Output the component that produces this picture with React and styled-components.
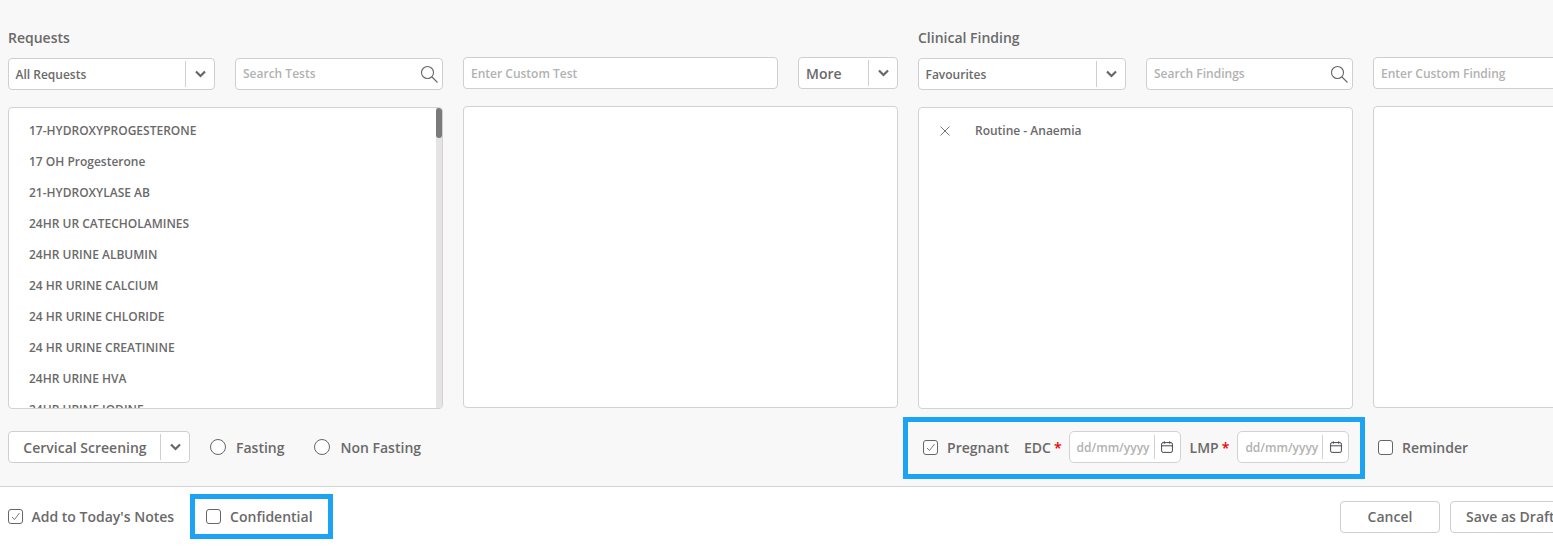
import React from "react";
import styled, { createGlobalStyle } from "styled-components";

const Global = createGlobalStyle`
  html, body { margin: 0; padding: 0; background: #fff; overflow: hidden; }
  body { font-family: "Open Sans", "Liberation Sans", sans-serif; color: #5f5f5f; }
  * { box-sizing: border-box; }
`;
const Page = styled.div`width:1553px;height:546px;overflow:hidden;display:flex;flex-direction:column;`;
const Main = styled.main`height:487px;flex:none;background:#f8f8f8;border-bottom:1px solid #d4d4d4;padding:28px 0 0 8px;`;
const Columns = styled.div`display:grid;grid-template-columns:repeat(4,435px);column-gap:20px;width:1800px;`;
const Column = styled.section`margin-top:${p=>p.$raised?-1:0}px;`;
const Heading = styled.h2`margin:0;height:20px;font-size:14px;line-height:19px;font-weight:600;color:#6a6a6a;`;
const Controls = styled.div`margin-top:10px;height:49px;display:flex;gap:20px;`;
const Field = styled.div`
  width:${p=>p.$w}px;height:32px;background:#fff;border:1px solid #cfcfcf;border-radius:4px;
  display:flex;align-items:center;flex:none;
`;
const SelectText = styled.span`flex:1;padding:1px 0 0 6.5px;font-size:12px;font-weight:600;color:#6a6a6a;`;
const Divider = styled.span`width:1px;height:26px;background:#cfcfcf;flex:none;`;
const Arrow = styled.span`width:28px;display:flex;justify-content:center;flex:none;`;
const Ph = styled.span`flex:1;padding:0 0 ${p=>p.$raised?0:2}px 7px;font-size:12px;font-weight:600;color:#b2b2b2;white-space:nowrap;`;
const Icon = styled.span`display:flex;margin-right:3px;`;
const MoreText = styled.span`flex:1;padding:1px 0 0 7px;font-size:14px;font-weight:600;color:#6a6a6a;`;
const Panel = styled.div`
  height:302px;background:#fff;border:1px solid #d2d2d2;border-radius:4px;position:relative;overflow:hidden;
`;
const Items = styled.ul`list-style:none;margin:0;padding:7px 0 0 20px;`;
const Item = styled.li`height:31px;font-size:12px;line-height:31px;font-weight:600;color:#6a6a6a;white-space:nowrap;`;
const Track = styled.div`position:absolute;right:0;top:0;bottom:0;width:6px;background:#e5e3e3;`;
const Thumb = styled.div`height:30px;background:#7a7a7a;border-radius:3px;`;
const Chip = styled.div`display:flex;align-items:center;height:31px;margin-top:7px;padding-left:21px;font-size:12px;font-weight:600;color:#6a6a6a;gap:25px;`;
const Options = styled.div`height:60px;margin-top:8px;display:flex;align-items:center;`;
const Choice = styled.label`display:flex;align-items:center;gap:${p=>p.$gap||10}px;font-size:14px;font-weight:600;color:#6a6a6a;white-space:nowrap;margin-left:${p=>p.$ml||0}px;`;
const Radio = styled.span`width:16px;height:16px;border:1px solid #666;border-radius:50%;background:#fff;display:block;flex:none;`;
const Box = styled.span`width:15px;height:15px;border:1px solid #666;border-radius:3px;background:#fff;display:flex;align-items:center;justify-content:center;flex:none;`;
const CervicalText = styled.span`flex:1;text-align:center;padding-left:1px;font-size:14px;font-weight:600;color:#6a6a6a;`;
const WideHighlight = styled.div`
  border:5px solid #1ca3f4;display:flex;align-items:center;flex:none;
  height:62px;width:462px;margin:2px 0 0 482px;padding:0 0 2px 15px;
`;
const SmallHighlight = styled.div`
  border:5px solid #1ca3f4;display:flex;align-items:center;flex:none;
  height:45px;width:143px;margin-left:16px;padding-left:11px;
`;
const Req = styled.span`color:#e00;margin-left:3px;`;
const Lab = styled.span`font-size:14px;font-weight:600;color:#6a6a6a;margin-left:${p=>p.$ml||0}px;white-space:nowrap;`;
const DateBox = styled.div`
  width:112px;height:32px;background:#fff;border:1px solid #d2d2d2;border-radius:5px;display:flex;align-items:center;margin-left:${p=>p.$ml}px;flex:none;
`;
const DatePh = styled.span`font-size:12px;font-weight:600;color:#b2b2b2;padding-left:7px;width:84px;white-space:nowrap;overflow:hidden;flex:none;`;
const DateDiv = styled.span`width:1px;height:24px;background:#d2d2d2;flex:none;`;
const DateIcon = styled.span`flex:1;display:flex;justify-content:center;`;
const Footer = styled.footer`flex:1;background:#fff;display:flex;align-items:center;padding:0 0 0 8px;`;
const Actions = styled.div`margin-left:auto;display:flex;gap:10px;flex:none;width:213px;`;
const Btn = styled.button`
  height:32px;width:${p=>p.$w}px;flex:none;background:#fff;border:1px solid #cfcfcf;border-radius:4px;font-family:inherit;font-size:14px;font-weight:600;color:#6a6a6a;padding:0;white-space:nowrap;text-align:${p=>p.$left?"left":"center"};padding-left:${p=>p.$left?15:0}px;
`;

const Chevron = () => (
  <svg width="11" height="8" viewBox="0 0 11 8"><path d="M1 1.5l4.5 4.5L10 1.5" fill="none" stroke="#666" strokeWidth="2.2"/></svg>
);
const Search = () => (
  <svg width="20" height="20" viewBox="0 0 20 20"><circle cx="8.5" cy="8.5" r="6" fill="none" stroke="#666" strokeWidth="1.1"/><path d="M13 13l5.5 5.5" stroke="#666" strokeWidth="1.1"/></svg>
);
const Check = () => (
  <svg width="11" height="11" viewBox="0 0 11 11"><path d="M2 6l2.5 2.5L9.5 2" fill="none" stroke="#666" strokeWidth="0.9"/></svg>
);
const Close = () => (
  <svg width="10" height="10" viewBox="0 0 10 10" style={{flex:"none"}}><path d="M.5.5l9 9M9.5.5l-9 9" stroke="#666" strokeWidth="0.9"/></svg>
);
const Cal = () => (
  <svg width="12" height="12" viewBox="0 0 12 12"><rect x=".6" y="1.6" width="10.8" height="9.8" rx="1.5" fill="none" stroke="#4a4450" strokeWidth="1"/><path d="M.6 4.8h10.8M3.3.3v2.4M8.7.3v2.4" stroke="#4a4450" strokeWidth="1" fill="none"/></svg>
);

const tests = ["17-HYDROXYPROGESTERONE","17 OH Progesterone","21-HYDROXYLASE AB","24HR UR CATECHOLAMINES","24HR URINE ALBUMIN","24 HR URINE CALCIUM","24 HR URINE CHLORIDE","24 HR URINE CREATININE","24HR URINE HVA","24HR URINE IODINE"];

export default function App() {
  return (
    <Page>
      <Global />
      <Main>
        <Columns>
          <Column>
            <Heading>Requests</Heading>
            <Controls>
              <Field $w={207}>
                <SelectText>All Requests</SelectText><Divider /><Arrow><Chevron /></Arrow>
              </Field>
              <Field $w={208}><Ph>Search Tests</Ph><Icon><Search /></Icon></Field>
            </Controls>
            <Panel>
              <Items>{tests.map(t => <Item key={t}>{t}</Item>)}</Items>
              <Track><Thumb /></Track>
            </Panel>
          </Column>
          <Column $raised>
            <Heading />
            <Controls>
              <Field $w={315}><Ph $raised>Enter Custom Test</Ph></Field>
              <Field $w={100}><MoreText>More</MoreText><Divider /><Arrow><Chevron /></Arrow></Field>
            </Controls>
            <Panel />
          </Column>
          <Column>
            <Heading>Clinical Finding</Heading>
            <Controls>
              <Field $w={208}>
                <SelectText>Favourites</SelectText><Divider /><Arrow><Chevron /></Arrow>
              </Field>
              <Field $w={207}><Ph>Search Findings</Ph><Icon><Search /></Icon></Field>
            </Controls>
            <Panel><Chip><Close />Routine - Anaemia</Chip></Panel>
          </Column>
          <Column $raised>
            <Heading />
            <Controls>
              <Field $w={435}><Ph $raised>Enter Custom Finding</Ph></Field>
            </Controls>
            <Panel />
          </Column>
        </Columns>
        <Options>
          <Field $w={182}>
            <CervicalText>Cervical Screening</CervicalText><Divider /><Arrow><Chevron /></Arrow>
          </Field>
          <Choice $ml={20}><Radio />Fasting</Choice>
          <Choice $ml={29} $gap={11}><Radio />Non Fasting</Choice>
          <WideHighlight>
            <Choice $gap={9}><Box><Check /></Box>Pregnant</Choice>
            <Lab $ml={15}>EDC<Req>*</Req></Lab>
            <DateBox $ml={7}><DatePh>dd/mm/yyyy</DatePh><DateDiv /><DateIcon><Cal /></DateIcon></DateBox>
            <Lab $ml={9}>LMP<Req>*</Req></Lab>
            <DateBox $ml={8}><DatePh>dd/mm/yyyy</DatePh><DateDiv /><DateIcon><Cal /></DateIcon></DateBox>
          </WideHighlight>
          <Choice $ml={13} $gap={9}><Box />Reminder</Choice>
        </Options>
      </Main>
      <Footer>
        <Choice $gap={8.5}><Box><Check /></Box>Add to Today's Notes</Choice>
        <SmallHighlight>
          <Choice $gap={9}><Box />Confidential</Choice>
        </SmallHighlight>
        <Actions>
          <Btn $w={100}>Cancel</Btn>
          <Btn $w={120} $left>Save as Draft</Btn>
        </Actions>
      </Footer>
    </Page>
  );
}
